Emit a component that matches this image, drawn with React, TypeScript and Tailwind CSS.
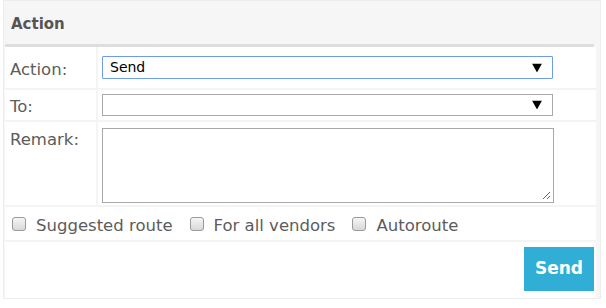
import React from "react";

const font = { fontFamily: '"DejaVu Sans", Verdana, sans-serif' };

function Arrow() {
  return (
    <svg width="10" height="9" viewBox="0 0 10 9" className="absolute right-[10px] top-1/2 -translate-y-1/2">
      <path d="M0 0 H10 L5 9 Z" fill="#000" />
    </svg>
  );
}

function Check({ label }: { label: string }) {
  return (
    <label className="flex items-center gap-[10px]">
      <span className="h-[14px] w-[14px] rounded-[3px] border border-[#9a9a9a] bg-gradient-to-b from-[#f6f6f6] to-[#d8d8d8]" />
      <span className="translate-y-[3px]">{label}</span>
    </label>
  );
}

export default function App() {
  return (
    <div className="h-[308px] w-[606px] bg-white pl-[3px]" style={font}>
      <div className="w-[598px] h-[299px] bg-[#f6f6f6] border border-[#ededed] flex flex-col">
        {/* Header */}
        <div className="h-[43px] flex items-center pl-[7px] pt-[4px] text-[15px] font-bold text-[#555]">Action</div>
        <div className="ml-[1px] mr-[6px] h-[3px] bg-[#dedede]" />

        {/* Body */}
        <div className="flex-1 ml-[1px] mr-[4px] bg-[#f4f4f4] grid grid-cols-[91px_1fr] grid-rows-[41px_30px_83px_33px_1fr] gap-[2px] text-[16.5px] text-[#5c5c5c]">
          <div className="bg-white flex items-center pl-[5px] pt-[5px]">Action:</div>
          <div className="bg-white flex items-center pl-[4px]">
            <div className="relative w-[451px] h-[23px] border border-[#6f9ce6] rounded-[1px] bg-white flex items-center pl-[7px] text-[14px] text-black">
              Send
              <Arrow />
            </div>
          </div>

          <div className="bg-white flex items-center pl-[5px] pt-[5px]">To:</div>
          <div className="bg-white flex items-center pl-[4px]">
            <div className="relative w-[451px] h-[22px] border border-[#a9a9a9] bg-white">
              <Arrow />
            </div>
          </div>

          <div className="bg-white pl-[5px] pt-[6px]">Remark:</div>
          <div className="bg-white pl-[4px] pt-[6px]">
            <div className="relative w-[452px] h-[75px] border border-[#a9a9a9] bg-white">
              <svg width="9" height="9" viewBox="0 0 9 9" className="absolute right-[2px] bottom-[2px]">
                <path d="M8 1 L1 8 M8 5 L5 8" stroke="#666" strokeWidth="1" />
              </svg>
            </div>
          </div>

          <div className="col-span-2 bg-white flex items-center gap-[17px] pl-[7px]">
            <Check label="Suggested route" />
            <Check label="For all vendors" />
            <Check label="Autoroute" />
          </div>

          <div className="col-span-2 bg-white flex justify-end items-start pr-[2px] pt-[5px]">
            <button className="h-[44px] w-[70px] bg-[#31aed5] text-white font-bold text-[17px]">Send</button>
          </div>
        </div>
      </div>
    </div>
  );
}
